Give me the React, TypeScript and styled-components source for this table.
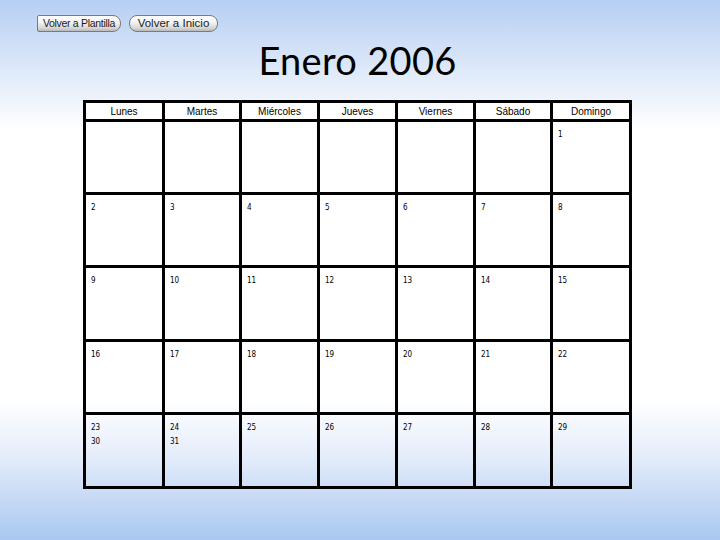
import React from "react";
import styled, { createGlobalStyle } from "styled-components";

const Global = createGlobalStyle`
  html, body { margin: 0; padding: 0; }
  body {
    width: 720px;
    height: 540px;
    overflow: hidden;
    background: linear-gradient(to bottom, #b5cff3 0%, #d5e3f8 10%, #ffffff 24%, #ffffff 74%, #e6eefb 84%, #a9c7f1 100%);
    font-family: "Liberation Sans", Arial, sans-serif;
  }
`;

const Page = styled.div`
  width: 720px;
  height: 540px;
  display: flex;
  flex-direction: column;
`;

const Toolbar = styled.div`
  display: flex;
  gap: 8px;
  padding: 15px 0 0 37px;
  height: 16px;
`;

const NavButton = styled.button<{ $w: number; $clip?: boolean }>`
  width: ${(p) => p.$w}px;
  height: 17px;
  padding: 0 ${(p) => (p.$clip ? 1 : 6)}px;
  margin: 0;
  border: 1px solid #7a7a7a;
  border-radius: ${(p) => (p.$clip ? "2px 8px 8px 2px" : "8px")};
  background: linear-gradient(to bottom, #ffffff 0%, #f2f2f2 45%, #d6d6d6 80%, #b9b9b9 100%);
  font-family: "Liberation Sans", Arial, sans-serif;
  font-size: ${(p) => (p.$clip ? 10.5 : 11.5)}px;
  letter-spacing: ${(p) => (p.$clip ? -0.3 : 0)}px;
  line-height: 15px;
  color: #1a1a1a;
  white-space: nowrap;
  overflow: hidden;
  text-align: center;
  box-sizing: border-box;
`;

const Content = styled.div`
  width: 549px;
  margin-left: 83px;
  display: flex;
  flex-direction: column;
`;

const Title = styled.h1`
  margin: 0;
  height: 69px;
  padding-top: 6px;
  box-sizing: border-box;
  text-align: center;
  font-family: "Lato", "Open Sans", sans-serif;
  font-weight: 400;
  font-size: 38px;
  line-height: 46px;
  color: #000;
  letter-spacing: 0.3px;
`;

const Grid = styled.div`
  display: grid;
  grid-template-columns: 79px 77px 78px 78px 78px 77px 79px;
  grid-template-rows: 19px 73px 73px 74px 73px 74px;
  border-left: 3px solid #000;
  border-top: 3px solid #000;
`;

const HeadCell = styled.div`
  border-right: 3px solid #000;
  border-bottom: 3px solid #000;
  display: flex;
  align-items: center;
  justify-content: center;
  font-family: "Liberation Sans", Arial, sans-serif;
  font-size: 10px;
  color: #000;
  padding-top: 1px;
  background: #fff;
`;

const DayCell = styled.div`
  border-right: 3px solid #000;
  border-bottom: 3px solid #000;
  padding: 6px 0 0 5px;
  font-family: "DejaVu Sans Condensed", "DejaVu Sans", sans-serif;
  font-size: 8px;
  line-height: 14px;
  color: #000;
  display: flex;
  flex-direction: column;
  align-items: flex-start;
`;

const days = ["Lunes", "Martes", "Miércoles", "Jueves", "Viernes", "Sábado", "Domingo"];

const weeks: string[][][] = [
  [[], [], [], [], [], [], ["1"]],
  [["2"], ["3"], ["4"], ["5"], ["6"], ["7"], ["8"]],
  [["9"], ["10"], ["11"], ["12"], ["13"], ["14"], ["15"]],
  [["16"], ["17"], ["18"], ["19"], ["20"], ["21"], ["22"]],
  [["23", "30"], ["24", "31"], ["25"], ["26"], ["27"], ["28"], ["29"]],
];

export default function App() {
  return (
    <Page>
      <Global />
      <Toolbar>
        <NavButton $w={84} $clip>Volver a Plantilla</NavButton>
        <NavButton $w={89}>Volver a Inicio</NavButton>
      </Toolbar>
      <Content>
        <Title>Enero 2006</Title>
        <Grid>
          {days.map((d) => (
            <HeadCell key={d}>{d}</HeadCell>
          ))}
          {weeks.map((w, wi) =>
            w.map((c, ci) => (
              <DayCell key={`${wi}-${ci}`}>
                {c.map((n) => (
                  <span key={n}>{n}</span>
                ))}
              </DayCell>
            ))
          )}
        </Grid>
      </Content>
    </Page>
  );
}
